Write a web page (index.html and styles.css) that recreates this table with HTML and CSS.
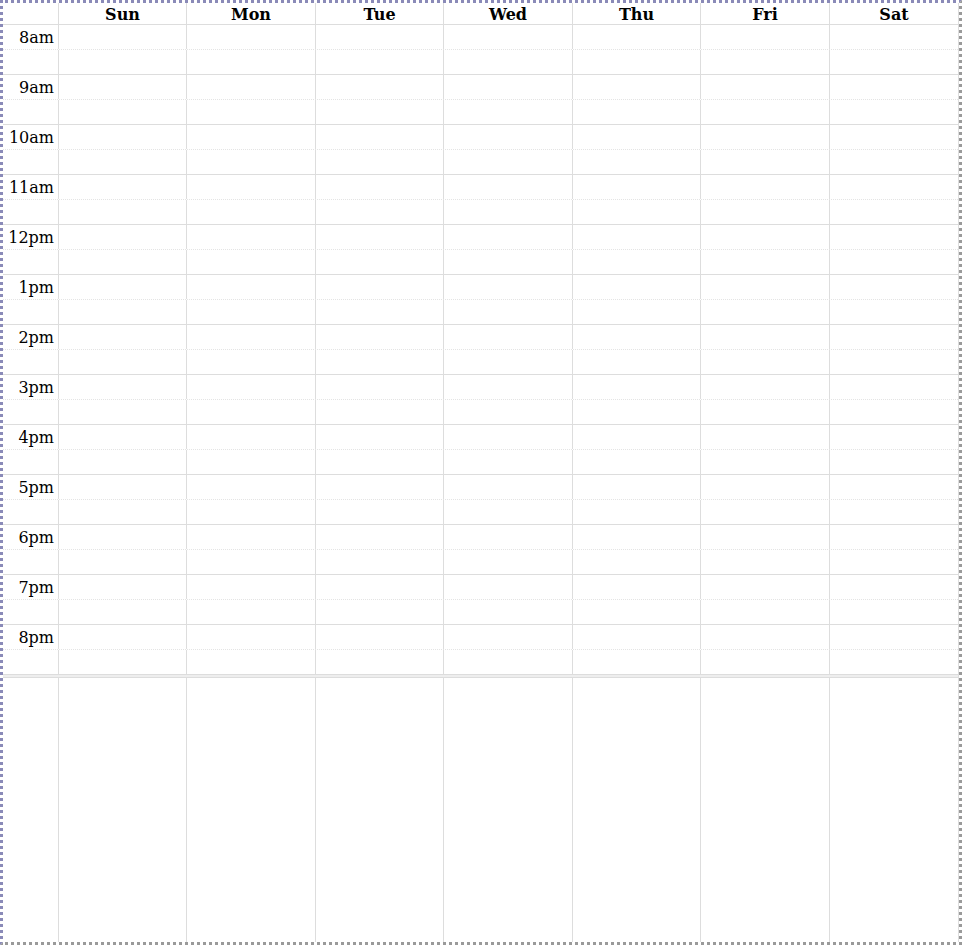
FILE: index.html
```
<!DOCTYPE html>
<html>
<head>
<meta charset="utf-8">
<link rel="stylesheet" href="styles.css">
</head>
<body>
<div class="frame">
  <div class="cal">
    <div class="row head">
      <div class="axis"></div>
      <div class="day">Sun</div><div class="day">Mon</div><div class="day">Tue</div><div class="day">Wed</div><div class="day">Thu</div><div class="day">Fri</div><div class="day">Sat</div>
    </div>
    <div class="slots">
      <div class="row slot major"><div class="axis">8am</div><div class="day"></div><div class="day"></div><div class="day"></div><div class="day"></div><div class="day"></div><div class="day"></div><div class="day"></div></div>
      <div class="row slot minor"><div class="axis"></div><div class="day"></div><div class="day"></div><div class="day"></div><div class="day"></div><div class="day"></div><div class="day"></div><div class="day"></div></div>
      <div class="row slot major"><div class="axis">9am</div><div class="day"></div><div class="day"></div><div class="day"></div><div class="day"></div><div class="day"></div><div class="day"></div><div class="day"></div></div>
      <div class="row slot minor"><div class="axis"></div><div class="day"></div><div class="day"></div><div class="day"></div><div class="day"></div><div class="day"></div><div class="day"></div><div class="day"></div></div>
      <div class="row slot major"><div class="axis">10am</div><div class="day"></div><div class="day"></div><div class="day"></div><div class="day"></div><div class="day"></div><div class="day"></div><div class="day"></div></div>
      <div class="row slot minor"><div class="axis"></div><div class="day"></div><div class="day"></div><div class="day"></div><div class="day"></div><div class="day"></div><div class="day"></div><div class="day"></div></div>
      <div class="row slot major"><div class="axis">11am</div><div class="day"></div><div class="day"></div><div class="day"></div><div class="day"></div><div class="day"></div><div class="day"></div><div class="day"></div></div>
      <div class="row slot minor"><div class="axis"></div><div class="day"></div><div class="day"></div><div class="day"></div><div class="day"></div><div class="day"></div><div class="day"></div><div class="day"></div></div>
      <div class="row slot major"><div class="axis">12pm</div><div class="day"></div><div class="day"></div><div class="day"></div><div class="day"></div><div class="day"></div><div class="day"></div><div class="day"></div></div>
      <div class="row slot minor"><div class="axis"></div><div class="day"></div><div class="day"></div><div class="day"></div><div class="day"></div><div class="day"></div><div class="day"></div><div class="day"></div></div>
      <div class="row slot major"><div class="axis">1pm</div><div class="day"></div><div class="day"></div><div class="day"></div><div class="day"></div><div class="day"></div><div class="day"></div><div class="day"></div></div>
      <div class="row slot minor"><div class="axis"></div><div class="day"></div><div class="day"></div><div class="day"></div><div class="day"></div><div class="day"></div><div class="day"></div><div class="day"></div></div>
      <div class="row slot major"><div class="axis">2pm</div><div class="day"></div><div class="day"></div><div class="day"></div><div class="day"></div><div class="day"></div><div class="day"></div><div class="day"></div></div>
      <div class="row slot minor"><div class="axis"></div><div class="day"></div><div class="day"></div><div class="day"></div><div class="day"></div><div class="day"></div><div class="day"></div><div class="day"></div></div>
      <div class="row slot major"><div class="axis">3pm</div><div class="day"></div><div class="day"></div><div class="day"></div><div class="day"></div><div class="day"></div><div class="day"></div><div class="day"></div></div>
      <div class="row slot minor"><div class="axis"></div><div class="day"></div><div class="day"></div><div class="day"></div><div class="day"></div><div class="day"></div><div class="day"></div><div class="day"></div></div>
      <div class="row slot major"><div class="axis">4pm</div><div class="day"></div><div class="day"></div><div class="day"></div><div class="day"></div><div class="day"></div><div class="day"></div><div class="day"></div></div>
      <div class="row slot minor"><div class="axis"></div><div class="day"></div><div class="day"></div><div class="day"></div><div class="day"></div><div class="day"></div><div class="day"></div><div class="day"></div></div>
      <div class="row slot major"><div class="axis">5pm</div><div class="day"></div><div class="day"></div><div class="day"></div><div class="day"></div><div class="day"></div><div class="day"></div><div class="day"></div></div>
      <div class="row slot minor"><div class="axis"></div><div class="day"></div><div class="day"></div><div class="day"></div><div class="day"></div><div class="day"></div><div class="day"></div><div class="day"></div></div>
      <div class="row slot major"><div class="axis">6pm</div><div class="day"></div><div class="day"></div><div class="day"></div><div class="day"></div><div class="day"></div><div class="day"></div><div class="day"></div></div>
      <div class="row slot minor"><div class="axis"></div><div class="day"></div><div class="day"></div><div class="day"></div><div class="day"></div><div class="day"></div><div class="day"></div><div class="day"></div></div>
      <div class="row slot major"><div class="axis">7pm</div><div class="day"></div><div class="day"></div><div class="day"></div><div class="day"></div><div class="day"></div><div class="day"></div><div class="day"></div></div>
      <div class="row slot minor"><div class="axis"></div><div class="day"></div><div class="day"></div><div class="day"></div><div class="day"></div><div class="day"></div><div class="day"></div><div class="day"></div></div>
      <div class="row slot major"><div class="axis">8pm</div><div class="day"></div><div class="day"></div><div class="day"></div><div class="day"></div><div class="day"></div><div class="day"></div><div class="day"></div></div>
      <div class="row slot minor"><div class="axis"></div><div class="day"></div><div class="day"></div><div class="day"></div><div class="day"></div><div class="day"></div><div class="day"></div><div class="day"></div></div>
    </div>
    <div class="divider"></div>
    <div class="row rest">
      <div class="axis"></div>
      <div class="day"></div><div class="day"></div><div class="day"></div><div class="day"></div><div class="day"></div><div class="day"></div><div class="day"></div>
    </div>
  </div>
</div>
</body>
</html>
```
FILE: styles.css
```
html, body {
  margin: 0;
  padding: 0;
  background: #fff;
}

body {
  font-family: "DejaVu Serif", serif;
  font-size: 16px;
  color: #000;
}

.frame {
  box-sizing: border-box;
  width: 962px;
  height: 945px;
  border-style: dotted;
  border-width: 3px;
  border-color: #8a8ab8 #9a9a9a #9a9a9a #8a8ab8;
  display: flex;
}

.cal {
  flex: 1;
  display: flex;
  flex-direction: column;
  border-right: 1px solid #ddd;
}

.row {
  display: grid;
  grid-template-columns: 55px 128px 129px 128px 129px 128px 129px 129px;
}

.row .day {
  border-left: 1px solid #ddd;
}

.head {
  height: 21px;
  line-height: 21px;
}

.head .day {
  font-weight: bold;
  text-align: center;
  padding-top: 1px;
  box-sizing: border-box;
}

.slot {
  box-sizing: border-box;
  height: 25px;
  border-top: 1px solid #ddd;
}

.slot.minor {
  border-top-style: dotted;
  border-top-color: #e4e4e4;
}

.slot .axis {
  text-align: right;
  padding-right: 4px;
  display: flex;
  align-items: center;
  justify-content: flex-end;
}

.divider {
  height: 2px;
  background: #eee;
  border-top: 1px solid #ddd;
  border-bottom: 1px solid #ddd;
}

.rest {
  flex: 1;
}
```
